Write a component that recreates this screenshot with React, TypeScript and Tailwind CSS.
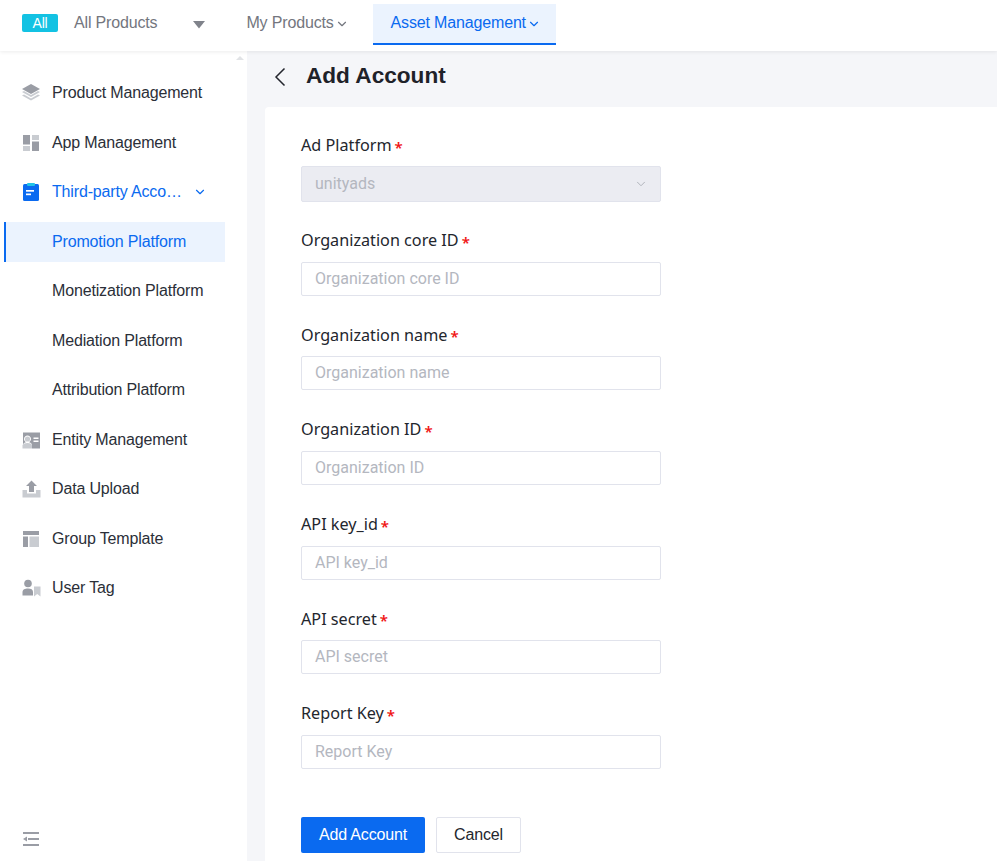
import React from "react";
import { ChevronDown } from "lucide-react";

const gray1 = "#9a9da5";
const gray2 = "#c9ccd1";

const IconLayers = () => (
  <svg width="20" height="20" viewBox="0 0 20 20">
    <path d="M10 1 19 6 10 11 1 6Z" fill={gray1} />
    <path d="M1 9.1 3 8.1 10 12.1 17 8.1 19 9.1 10 14.1Z" fill={gray2} />
    <path d="M1 12.5 3 11.5 10 15.5 17 11.5 19 12.5 10 17.5Z" fill={gray2} />
  </svg>
);
const IconApp = () => (
  <svg width="20" height="20" viewBox="0 0 20 20">
    <rect x="2" y="2" width="7" height="9.5" fill={gray1} />
    <rect x="2" y="13" width="7" height="5" fill={gray2} />
    <rect x="11" y="2" width="7" height="5" fill={gray2} />
    <rect x="11" y="8.5" width="7" height="9.5" fill={gray1} />
  </svg>
);
const IconClip = () => (
  <svg width="20" height="20" viewBox="0 0 20 20">
    <rect x="2" y="2" width="16" height="17" rx="1.5" fill="#0a6af0" />
    <rect x="6" y="1" width="8" height="3" rx="1" fill="#22c3e6" />
    <rect x="5" y="8" width="8" height="1.7" fill="#fff" />
    <rect x="5" y="11.5" width="5" height="1.7" fill="#fff" />
  </svg>
);
const IconEntity = () => (
  <svg width="20" height="20" viewBox="0 0 20 20">
    <path d="M2 2.5H19V18.5H11V15C11 13.5 9.5 12.5 8 12.2 9.2 11.5 10 10.3 10 9 10 7 8.2 5.6 6.5 5.6 4.7 5.6 3 7 3 9 3 10.3 3.7 11.5 5 12.2 3.5 12.5 2 13.5 2 15Z" fill={gray1} />
    <path d="M1.5 18.5V15.5C1.5 14 3.5 13 6.5 13S11 14 11 15.5V18.5Z" fill={gray2} />
    <circle cx="6.5" cy="9" r="2.6" fill={gray2} />
    <rect x="12.5" y="7.5" width="5" height="1.5" fill="#fff" />
    <rect x="12.5" y="10.5" width="5" height="1.5" fill="#fff" />
  </svg>
);
const IconUpload = () => (
  <svg width="20" height="20" viewBox="0 0 20 20">
    <path d="M10.5 1.5 16 7H13V13H8V7H5Z" fill={gray1} />
    <path d="M1.5 18.5V11H6V14.5H15V11H19.5V18.5Z" fill={gray2} />
  </svg>
);
const IconTemplate = () => (
  <svg width="20" height="20" viewBox="0 0 20 20">
    <rect x="2" y="2" width="16" height="4" fill={gray1} />
    <rect x="2" y="7.5" width="5" height="10.5" fill={gray1} />
    <rect x="8.5" y="7.5" width="9.5" height="10.5" fill={gray2} />
  </svg>
);
const IconUser = () => (
  <svg width="20" height="20" viewBox="0 0 20 20">
    <circle cx="7" cy="5.5" r="3.8" fill={gray1} />
    <path d="M1.5 17.5V14C1.5 11.5 4 10.5 7 10.5S12 11.5 12 14V17.5Z" fill={gray1} />
    <path d="M13 8.5H19.5V18.5L16.25 16 13 18.5Z" fill={gray2} />
  </svg>
);
const IconCollapse = () => (
  <svg width="18" height="16" viewBox="0 0 18 16">
    <rect x="1" y="1" width="16" height="2" fill={gray1} />
    <rect x="6" y="7" width="11" height="2" fill={gray1} />
    <path d="M1 8 5 5.5V10.5Z" fill={gray1} />
    <rect x="1" y="13" width="16" height="2" fill={gray1} />
  </svg>
);

const NavItem = ({ icon, label }: { icon: React.ReactNode; label: string }) => (
  <div className="mb-[9.5px] flex h-10 items-center pl-[21px] text-[#2b2f38]">
    <span className="mr-[11px] flex w-5 shrink-0 justify-center">{icon}</span>
    <span>{label}</span>
  </div>
);
const SubItem = ({ label }: { label: string }) => (
  <div className="mb-[9.5px] flex h-10 items-center pl-[52px] text-[#2b2f38]">{label}</div>
);

const Label = ({ text }: { text: string }) => (
  <div className="flex h-[21px] items-center pb-[1px] font-['Noto_Sans'] text-[16.2px] tracking-normal text-[#23262d]">
    <span>{text}</span>
    <span className="ml-[3px] translate-y-[2px] text-[15px] font-semibold leading-none text-[#f01414]">*</span>
  </div>
);

const Field = ({ label }: { label: string }) => (
  <div className="mb-[29.1px]">
    <Label text={label} />
    <div className="mt-[10.5px] flex h-[34px] items-center rounded-[2px] border border-[#e1e3ec] bg-white px-[13px] font-['Roboto'] text-[16px] tracking-normal text-[#b4b7bf]">
      {label}
    </div>
  </div>
);

export default function App() {
  return (
    <div className="flex h-[861px] w-[997px] flex-col overflow-hidden bg-[#f5f6f9] font-['Liberation_Sans'] text-[16px] tracking-[-0.16px]">
      <header className="z-10 flex h-[51px] shrink-0 items-start bg-white shadow-[0_1px_4px_rgba(0,0,0,0.08)]">
        <div className="ml-[22px] mt-[14px] flex h-[18px] w-[36px] items-center justify-center rounded-[2px] bg-[#13c2e3] text-[14px] text-white">
          All
        </div>
        <div className="ml-[16px] flex h-[46px] items-center text-[#73767e]">All Products</div>
        <svg width="14" height="9" viewBox="0 0 14 9" className="ml-[35px] mt-[20px]">
          <path d="M1 1H13L7 8.5Z" fill="#80838b" />
        </svg>
        <div className="ml-[40px] flex h-[46px] items-center text-[#73767e]">
          My Products
          <ChevronDown size={14} strokeWidth={2} className="ml-[1px] mt-[2px]" />
        </div>
        <div className="ml-[24px] mt-[4px] flex h-[41px] w-[183px] items-center border-b-2 border-[#0a6af0] bg-[#ebf3fe] pb-[1px] pl-[18px] text-[#0a6af0]">
          Asset Management
          <ChevronDown size={14} strokeWidth={2} className="ml-[1px] mt-[2px]" />
        </div>
      </header>

      <div className="flex min-h-0 flex-1">
        <aside className="relative flex w-[247px] shrink-0 flex-col bg-white pt-[22px]">
          <div className="absolute right-[3px] top-[5px] h-0 w-0 border-x-[4px] border-b-[4px] border-x-transparent border-b-[#e1e3e6]" />
          <NavItem icon={<IconLayers />} label="Product Management" />
          <NavItem icon={<IconApp />} label="App Management" />
          <div className="mb-[9.5px] flex h-10 items-center pl-[21px] text-[#0a6af0]">
            <span className="mr-[11px] flex w-5 shrink-0 justify-center"><IconClip /></span>
            <span className="w-[131px] truncate">Third-party Accounts</span>
            <ChevronDown size={14} strokeWidth={2} className="ml-[10px] text-[#0a6af0]" />
          </div>
          <div className="mb-[9.5px] ml-[4px] flex h-10 w-[221px] items-center border-l-2 border-[#0a6af0] bg-[#ebf3fe] pl-[46px] text-[#0a6af0]">
            Promotion Platform
          </div>
          <SubItem label="Monetization Platform" />
          <SubItem label="Mediation Platform" />
          <SubItem label="Attribution Platform" />
          <NavItem icon={<IconEntity />} label="Entity Management" />
          <NavItem icon={<IconUpload />} label="Data Upload" />
          <NavItem icon={<IconTemplate />} label="Group Template" />
          <NavItem icon={<IconUser />} label="User Tag" />
          <div className="mt-auto pb-[14px] pl-[22px]"><IconCollapse /></div>
        </aside>

        <main className="flex min-w-0 flex-1 flex-col pl-[18px]">
          <div className="flex h-[56px] shrink-0 items-center pb-[5px]">
            <svg width="14" height="20" viewBox="0 0 14 20" className="ml-[8px]">
              <path d="M11.5 1.5 3 10l8.5 8.5" fill="none" stroke="#23262d" strokeWidth="1.5" />
            </svg>
            <h1 className="ml-[19px] text-[22.6px] font-bold leading-none tracking-normal text-[#1f2229]">Add Account</h1>
          </div>
          <div className="flex-1 rounded-tl-[4px] bg-white pl-[36px] pt-[28px]">
            <div className="w-[360px]">
              <div className="mb-[28.4px]">
                <Label text="Ad Platform" />
                <div className="mt-[10px] flex h-[36px] items-center justify-between rounded-[2px] border border-[#e1e3ec] bg-[#ebecf2] pl-[13px] pr-[12px] font-['Roboto'] text-[16px] tracking-normal text-[#b4b7bf]">
                  <span>unityads</span>
                  <ChevronDown size={14} strokeWidth={1.5} className="text-[#a8abb3]" />
                </div>
              </div>
              <Field label="Organization core ID" />
              <Field label="Organization name" />
              <Field label="Organization ID" />
              <Field label="API key_id" />
              <Field label="API secret" />
              <Field label="Report Key" />
              <div className="mt-[48.2px] flex">
                <button className="flex h-[36px] w-[124px] items-center justify-center rounded-[2px] bg-[#0a6af0] text-white">
                  Add Account
                </button>
                <button className="ml-[11px] flex h-[36px] w-[85px] items-center justify-center rounded-[2px] border border-[#e1e3ec] bg-white text-[#23262d]">
                  Cancel
                </button>
              </div>
            </div>
          </div>
        </main>
      </div>
    </div>
  );
}
